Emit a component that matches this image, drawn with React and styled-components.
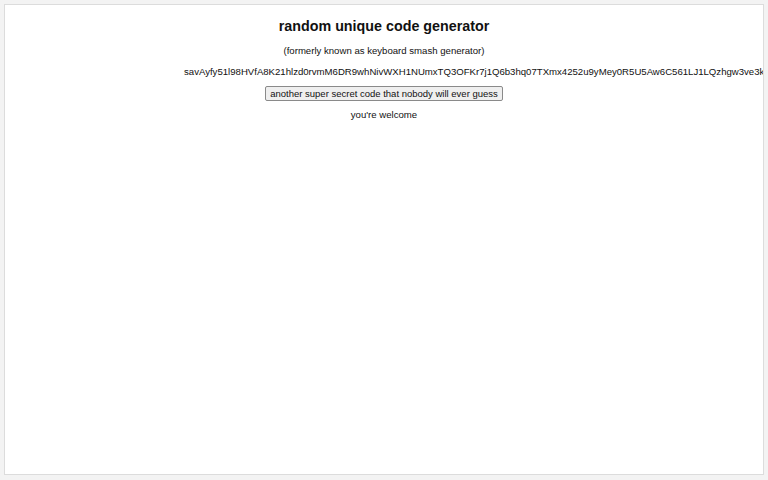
import React, { useState } from 'react';
import styled, { createGlobalStyle } from 'styled-components';

const GlobalStyle = createGlobalStyle`
    html, body {
        margin: 0;
        height: 100%;
        background: #f3f3f3;
    }
    #root {
        height: 100%;
    }
`;

const Frame = styled.div`
    box-sizing: border-box;
    height: 100%;
    padding: 4px 4px 5px 4px;
`;

const Page = styled.div`
    box-sizing: border-box;
    height: 100%;
    background: #fff;
    border: 1px solid #dcdcdc;
    overflow: hidden;
    font-family: "Liberation Sans", Arial, sans-serif;
    color: #111;
`;

const Column = styled.div`
    width: 400px;
    margin: 0 auto;
    text-align: center;
    padding-top: 12px;
`;

const Title = styled.h1`
    margin: 0;
    font-size: 14.3px;
    font-weight: bold;
    line-height: 18px;
`;

const Line = styled.p`
    margin: ${props => props.$top || 0}px 0 0 0;
    font-size: 9.6px;
    line-height: 12px;
    white-space: nowrap;
`;

const Button = styled.button`
    display: inline-block;
    margin-top: 8px;
    font-family: "Liberation Sans", Arial, sans-serif;
    font-size: 9.5px;
    line-height: 11px;
    padding: 1px 4px;
    color: #111;
    background: #efefef;
    border: 1px solid #8a8a8a;
    border-radius: 2px;
`;

const chars = 'ABCDEFGHIJKLMNOPQRSTUVWXYZabcdefghijklmnopqrstuvwxyz0123456789';

const makeCode = () => {
    let out = '';
    for (let i = 0; i < 120; i++) {
        out += chars[Math.floor(Math.random() * chars.length)];
    }
    return out;
};

const App = () => {
    const [code, setCode] = useState('savAyfy51l98HVfA8K21hlzd0rvmM6DR9whNivWXH1NUmxTQ3OFKr7j1Q6b3hq07TXmx4252u9yMey0R5U5Aw6C561LJ1LQzhgw3ve3k8PqZ2nW');
    return (
        <Frame>
            <GlobalStyle />
            <Page>
                <Column>
                    <Title>random unique code generator</Title>
                    <Line $top={10}>(formerly known as keyboard smash generator)</Line>
                    <Line $top={9}>{code}</Line>
                    <Button onClick={() => setCode(makeCode())}>
                        another super secret code that nobody will ever guess
                    </Button>
                    <Line $top={8}>you're welcome</Line>
                </Column>
            </Page>
        </Frame>
    );
};

export default App;
